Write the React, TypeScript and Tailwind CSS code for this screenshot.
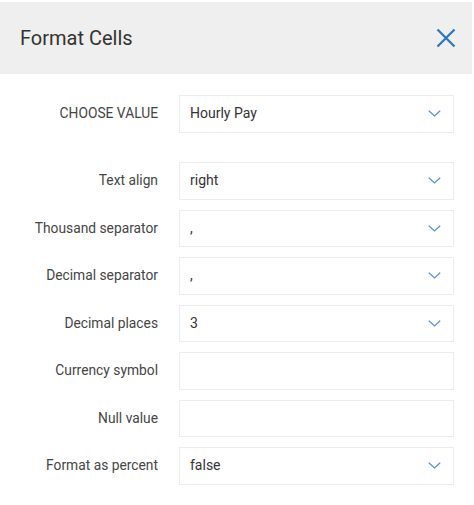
import React from "react";

const Chevron = () => (
  <svg width="13" height="7" viewBox="0 0 13 7" fill="none" className="shrink-0">
    <path d="M0.8 0.8 L6.5 6 L12.2 0.8" stroke="#5a8fcf" strokeWidth="1.2" />
  </svg>
);

type Row = { label: string; value?: string; select: boolean };

const rows: Row[] = [
  { label: "Text align", value: "right", select: true },
  { label: "Thousand separator", value: ",", select: true },
  { label: "Decimal separator", value: ",", select: true },
  { label: "Decimal places", value: "3", select: true },
  { label: "Currency symbol", select: false },
  { label: "Null value", select: false },
  { label: "Format as percent", value: "false", select: true },
];

const Field = ({ label, value, select }: Row) => (
  <div className="flex items-center">
    <div className="w-[158px] shrink-0 text-right text-[13.8px] text-[#454545]">{label}</div>
    <div className="ml-[21px] flex h-[37.5px] w-[275px] items-center justify-between border border-[#ececec] bg-white pl-[10px] pr-[12px] text-[14px] text-[#333]">
      <span>{value ?? ""}</span>
      {select && <Chevron />}
    </div>
  </div>
);

export default function App() {
  return (
    <div
      className="h-[505px] w-[474px] bg-white pt-[2px] pr-[2px]"
      style={{ fontFamily: "Roboto, 'Liberation Sans', sans-serif" }}
    >
      <div className="flex h-[72px] items-center justify-between bg-[#efefef] pl-[20px] pr-[16px]">
        <div className="text-[20px] text-[#333]">Format Cells</div>
        <svg width="20" height="20" viewBox="0 0 20 20" fill="none">
          <path d="M1.5 1.5 L18.5 18.5 M18.5 1.5 L1.5 18.5" stroke="#2a74bf" strokeWidth="2.2" />
        </svg>
      </div>
      <div className="pt-[21px]">
        <Field label="CHOOSE VALUE" value="Hourly Pay" select />
        <div className="mt-[29.5px] flex flex-col gap-[10px]">
          {rows.map((r) => (
            <Field key={r.label} {...r} />
          ))}
        </div>
      </div>
    </div>
  );
}
